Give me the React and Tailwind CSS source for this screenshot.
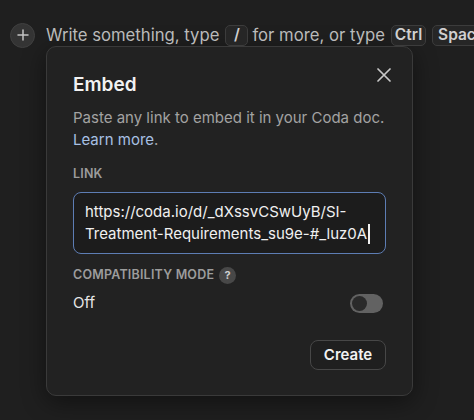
function Kbd({ children, className = "" }) {
  return (
    <span
      className={
        "inline-flex h-[21px] shrink-0 items-center justify-center rounded-[5px] border border-[#3c3c3c] bg-[#262626] text-[15.5px] font-semibold text-[#d0d0d0] " +
        className
      }
    >
      {children}
    </span>
  );
}

export default function App() {
  return (
    <div
      className="h-[420px] w-[474px] overflow-hidden bg-[#1f1f1f] text-white"
      style={{ fontFamily: "Inter, 'Liberation Sans', sans-serif" }}
    >
      {/* editor placeholder row */}
      <div className="box-content flex h-[26px] items-center whitespace-nowrap pl-[10px] pt-[22px]">
        <div className="flex h-[25px] w-[25px] shrink-0 items-center justify-center rounded-full border border-[#404040] bg-[#343434]">
          <svg width="12" height="12" viewBox="0 0 12 12" fill="none" stroke="#c4c4c4" strokeWidth="1.5" strokeLinecap="round">
            <path d="M6 1v10M1 6h10" />
          </svg>
        </div>
        <span className="ml-[11px] shrink-0 text-[16.7px] leading-[26px] text-[#bababa]">Write something, type</span>
        <Kbd className="ml-[6px] w-[23px] font-normal">/</Kbd>
        <span className="ml-[4px] shrink-0 text-[16.7px] leading-[26px] text-[#bababa]">for more, or type</span>
        <Kbd className="ml-[6px] w-[35px]">Ctrl</Kbd>
        <Kbd className="ml-[6px] px-[5px]">Space</Kbd>
      </div>

      {/* embed dialog */}
      <div className="ml-[46px] mt-[-2px] w-[367px] rounded-[10px] border border-[#3a3a3a] bg-[#222222] pb-[25px] pl-[26px] pr-[26px] pt-[24px] shadow-[0_6px_24px_rgba(0,0,0,0.45)]">
        <div className="flex items-start justify-between">
          <h2 className="text-[19px] font-semibold leading-[28px] text-[#f2f2f2]">Embed</h2>
          <button className="mr-[-5px] mt-[-3px] p-[0px]">
            <svg width="14" height="14" viewBox="0 0 14 14" fill="none" stroke="#c8c8c8" strokeWidth="1.7" strokeLinecap="round">
              <path d="M1 1l12 12M13 1L1 13" />
            </svg>
          </button>
        </div>
        <p className="mt-[8px] text-[15px] leading-[22px] text-[#a3a3a3]">
          Paste any link to embed it in your Coda doc.
          <br />
          <span className="text-[#a8c0e4]">Learn more</span>.
        </p>

        <div className="mt-[14px] text-[12.5px] font-semibold leading-[18px] tracking-[0.2px] text-[#9c9c9c]">LINK</div>
        <div className="mt-[9px] rounded-[8px] border-[1.5px] border-[#5d7db4] bg-[#1c1c1c] px-[11px] py-[8px] text-[15px] leading-[22px] text-[#f0f0f0]">
          <div className="whitespace-nowrap">https://coda.io/d/_dXssvCSwUyB/SI-</div>
          <div className="flex items-center whitespace-nowrap">
            Treatment-Requirements_su9e-#_luz0A
            <span className="ml-[1px] inline-block h-[20px] w-[1.5px] bg-[#f0f0f0]" />
          </div>
        </div>

        <div className="mt-[12px] flex items-center gap-[5px]">
          <span className="text-[12.5px] font-semibold leading-[18px] tracking-[0.2px] text-[#9c9c9c]">COMPATIBILITY MODE</span>
          <span className="flex h-[17px] w-[17px] items-center justify-center rounded-full bg-[#484848] text-[11px] font-bold leading-none text-[#cfcfcf]">
            ?
          </span>
        </div>
        <div className="mt-[8px] flex items-center justify-between">
          <span className="text-[15px] leading-[22px] text-[#e6e6e6]">Off</span>
          <div className="mr-[3px] flex h-[19px] w-[33px] items-center rounded-full bg-[#626262] px-[2px]">
            <div className="h-[15px] w-[15px] rounded-full bg-[#2a2a2a]" />
          </div>
        </div>

        <div className="mt-[26px] flex justify-end">
          <button className="h-[30px] w-[76px] rounded-[8px] border-[1.5px] border-[#474747] bg-[#1f1f1f] text-[15px] font-semibold text-[#f2f2f2]">
            Create
          </button>
        </div>
      </div>
    </div>
  );
}
